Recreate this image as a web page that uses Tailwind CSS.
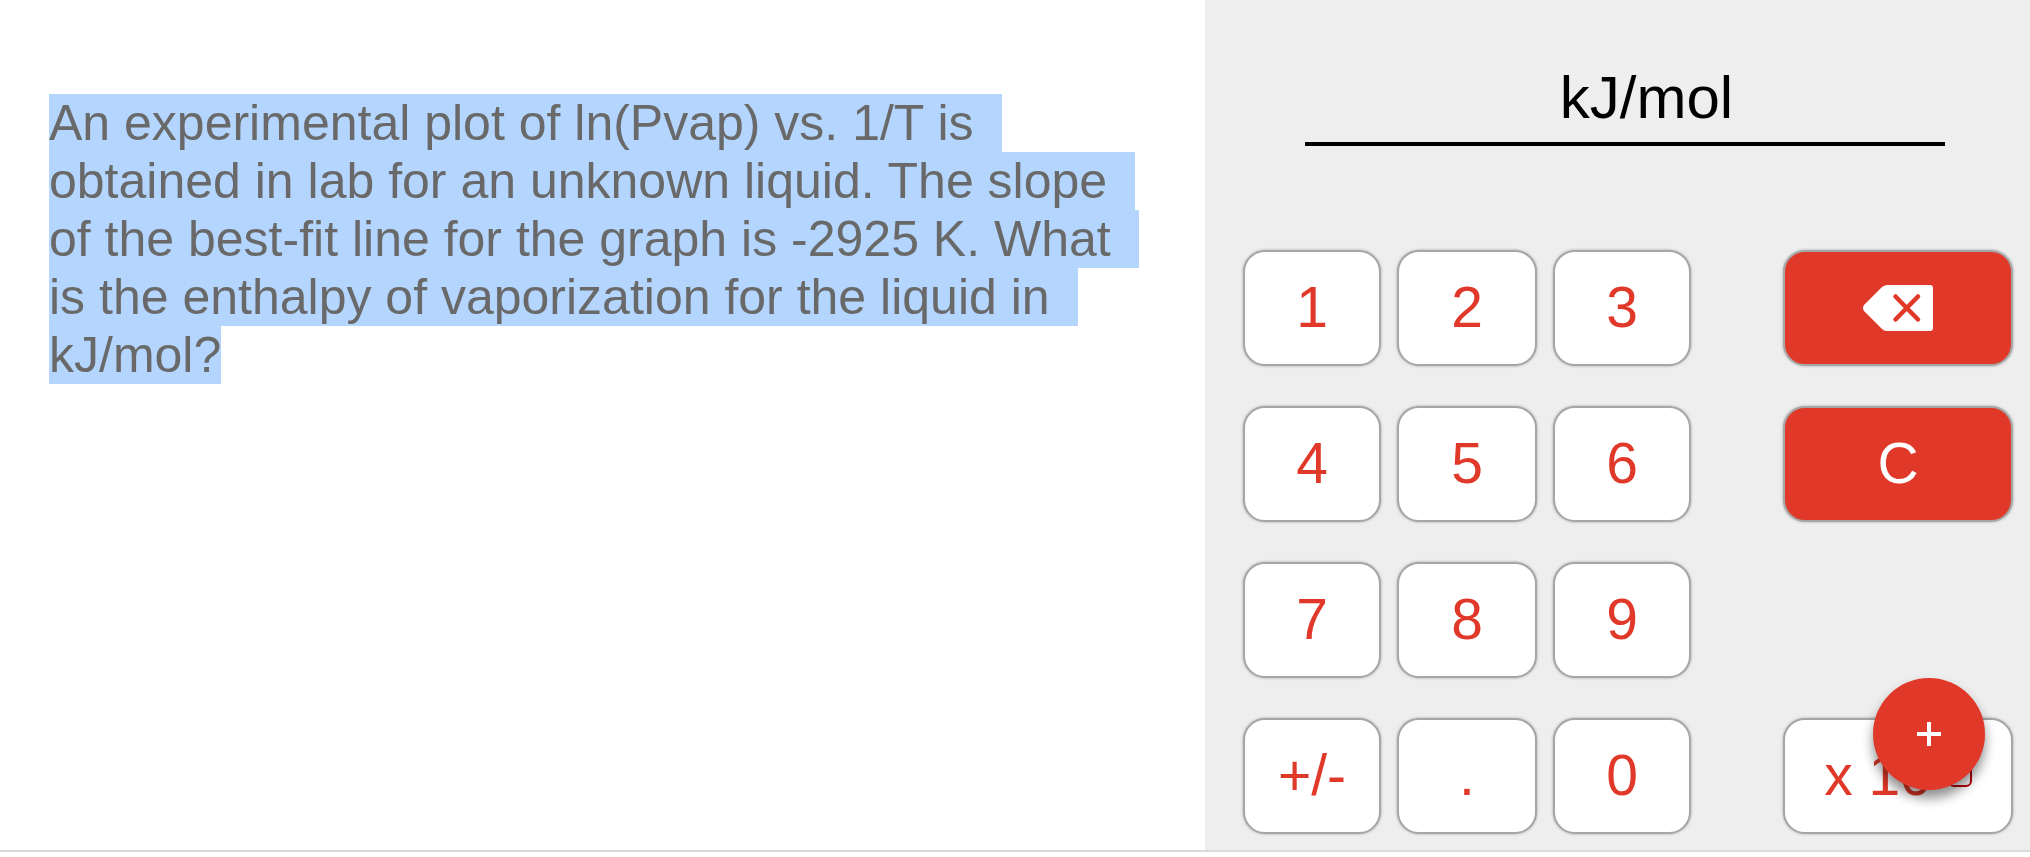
<!DOCTYPE html>
<html lang="en">

<head>
  <meta charset="UTF-8">
  <meta name="viewport" content="width=device-width, initial-scale=1.0">
  <title>Enthalpy of Vaporization</title>
  <script src="https://cdn.jsdelivr.net/npm/@tailwindcss/browser@4"></script>
</head>

<body class="bg-white font-['Liberation_Sans',Arial,sans-serif]">
  <main class="flex border-b-2 border-[#dadada]">
    <!-- Question -->
    <section class="flex-1 pt-[94px] pl-[49px]">
      <p class="text-[50px] leading-[58px] text-[#696969]">
        <span class="block w-fit bg-[#b4d6fe] pr-7">An experimental plot of ln(Pvap) vs. 1/T is</span>
        <span class="block w-fit bg-[#b4d6fe] pr-7">obtained in lab for an unknown liquid. The slope</span>
        <span class="block w-fit bg-[#b4d6fe] pr-7">of the best-fit line for the graph is -2925 K. What</span>
        <span class="block w-fit bg-[#b4d6fe] pr-7">is the enthalpy of vaporization for the liquid in</span>
        <span class="block w-fit bg-[#b4d6fe]">kJ/mol?</span>
      </p>
    </section>

    <!-- Answer + keypad -->
    <section class="w-[825px] bg-[#eeeeee] pt-16 pb-4 pl-[38px] pr-[17px]">
      <div class="ml-[62px] mr-[68px] border-b-4 border-black pb-2.5 pl-[43px] text-center text-[60px] leading-[68px] text-black">kJ/mol</div>

      <div class="mt-[104px] flex justify-between">
        <div class="grid grid-cols-[138px_140px_138px] auto-rows-[116px] gap-x-4 gap-y-10 text-[57px] leading-none text-[#e03829]">
          <button class="rounded-[22px] border-2 border-[#a6a6a6] bg-white pb-0.5 shadow-[0_0_3px_#a6a6a6]">1</button>
          <button class="rounded-[22px] border-2 border-[#a6a6a6] bg-white pb-0.5 shadow-[0_0_3px_#a6a6a6]">2</button>
          <button class="rounded-[22px] border-2 border-[#a6a6a6] bg-white pb-0.5 shadow-[0_0_3px_#a6a6a6]">3</button>
          <button class="rounded-[22px] border-2 border-[#a6a6a6] bg-white pb-0.5 shadow-[0_0_3px_#a6a6a6]">4</button>
          <button class="rounded-[22px] border-2 border-[#a6a6a6] bg-white pb-0.5 shadow-[0_0_3px_#a6a6a6]">5</button>
          <button class="rounded-[22px] border-2 border-[#a6a6a6] bg-white pb-0.5 shadow-[0_0_3px_#a6a6a6]">6</button>
          <button class="rounded-[22px] border-2 border-[#a6a6a6] bg-white pb-0.5 shadow-[0_0_3px_#a6a6a6]">7</button>
          <button class="rounded-[22px] border-2 border-[#a6a6a6] bg-white pb-0.5 shadow-[0_0_3px_#a6a6a6]">8</button>
          <button class="rounded-[22px] border-2 border-[#a6a6a6] bg-white pb-0.5 shadow-[0_0_3px_#a6a6a6]">9</button>
          <button class="rounded-[22px] border-2 border-[#a6a6a6] bg-white pb-0.5 shadow-[0_0_3px_#a6a6a6]">+/-</button>
          <button class="rounded-[22px] border-2 border-[#a6a6a6] bg-white pb-0.5 shadow-[0_0_3px_#a6a6a6]">.</button>
          <button class="rounded-[22px] border-2 border-[#a6a6a6] bg-white pb-0.5 shadow-[0_0_3px_#a6a6a6]">0</button>
        </div>

        <div class="grid w-[230px] grid-rows-[116px_116px_116px_116px] gap-y-10 text-[57px] leading-none text-white">
          <button aria-label="Backspace" class="flex items-center justify-center rounded-[22px] border-2 border-[#a6a6a6] bg-[#e03829] shadow-[0_0_3px_#a6a6a6]">
            <svg class="h-[46px] w-[70px]" viewBox="0 0 70 46" fill="none">
              <path d="M24 0H67Q70 0 70 3V43Q70 46 67 46H24Q21 46 18.500 43.500L1 26Q-1 23 1 20L18.500 2.500Q21 0 24 0Z" fill="#fff" />
              <path d="M32.500 11.500L55 34.500M55 11.500L32.500 34.500" stroke="#e03829" stroke-width="4.500" stroke-linecap="round" />
            </svg>
          </button>
          <button class="rounded-[22px] border-2 border-[#a6a6a6] bg-[#e03829] pb-0.5 shadow-[0_0_3px_#a6a6a6]">C</button>
          <div class="row-start-4 relative grid">
            <button class="flex items-center justify-center gap-4 rounded-[22px] border-2 border-[#a6a6a6] bg-white pb-0.5 text-[#e03829] shadow-[0_0_3px_#a6a6a6]">
              <span>x 10</span>
              <span class="size-6 rounded-md border-2 border-[#c00010]"></span>
            </button>
            <!-- floating add button over the key -->
            <button aria-label="Add" class="absolute -top-10 right-7 flex size-28 items-center justify-center rounded-full bg-[#e03829] shadow-[0_8px_12px_rgba(0,0,0,0.45)]">
              <svg class="size-6" viewBox="0 0 24 24" fill="#fff">
                <path d="M10 0h4v10h10v4H14v10h-4V14H0v-4h10z" />
              </svg>
            </button>
          </div>
        </div>
      </div>
    </section>
  </main>
</body>

</html>
